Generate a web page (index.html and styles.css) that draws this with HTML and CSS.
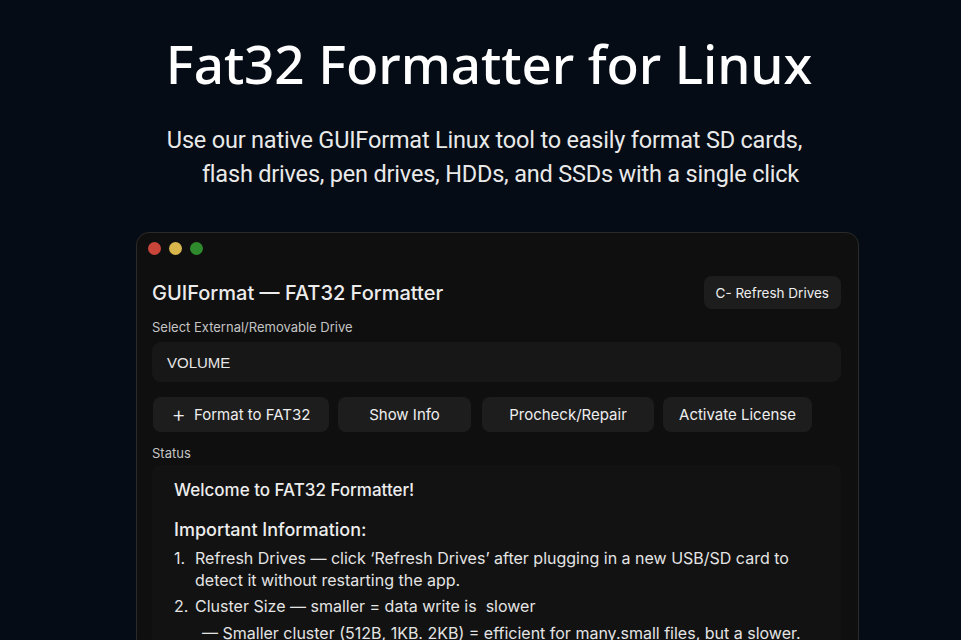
FILE: index.html
```html
<!DOCTYPE html>
<html lang="en">
<head>
<meta charset="utf-8">
<title>Fat32 Formatter for Linux</title>
<link rel="stylesheet" href="styles.css">
</head>
<body>
<main class="page">
  <header class="hero">
    <h1 class="hero-title">Fat32 Formatter for Linux</h1>
    <p class="hero-sub">
      <span class="line">Use our native GUIFormat Linux tool to easily format SD cards,</span>
      <span class="line line-2">flash drives, pen drives, HDDs, and SSDs with a single click</span>
    </p>
  </header>

  <section class="window">
    <div class="titlebar">
      <span class="dot dot-red"></span>
      <span class="dot dot-yellow"></span>
      <span class="dot dot-green"></span>
    </div>
    <div class="content">
      <div class="app-head">
        <h2 class="app-title">GUIFormat — FAT32 Formatter</h2>
        <button class="btn btn-refresh">C- Refresh Drives</button>
      </div>
      <div class="field-label">Select External/Removable Drive</div>
      <div class="select">VOLUME</div>
      <div class="actions">
        <button class="btn btn-action btn-format"><span class="plus">+</span>Format to FAT32</button>
        <button class="btn btn-action btn-info">Show Info</button>
        <button class="btn btn-action btn-check">Procheck/Repair</button>
        <button class="btn btn-action btn-license">Activate License</button>
      </div>
      <div class="field-label status-label">Status</div>
      <div class="status">
        <p class="status-welcome">Welcome to FAT32 Formatter!</p>
        <p class="status-heading">Important Information:</p>
        <ol class="status-list">
          <li><span class="num">1.</span><span class="txt">Refresh Drives — click ‘Refresh Drives’ after plugging in a new USB/SD card to detect it without restarting the app.</span></li>
          <li><span class="num">2.</span><span class="txt">Cluster Size — smaller = data write is&nbsp;&nbsp;slower<span class="sub">— Smaller cluster (512B, 1KB. 2KB) = efficient for many.small files, but a slower.</span></span></li>
        </ol>
      </div>
    </div>
  </section>
</main>
</body>
</html>
```

FILE: styles.css
```css
* { box-sizing: border-box; }

html, body {
  margin: 0;
  padding: 0;
  height: 100%;
  overflow: hidden;
}

body {
  background: #050c15;
  color: #f2f2f2;
  font-family: "Inter", "Liberation Sans", sans-serif;
}

.page {
  display: flex;
  flex-direction: column;
  align-items: center;
}

.hero {
  display: flex;
  flex-direction: column;
  align-items: center;
}

.hero-title {
  margin: 0;
  padding: 32px 0 0 17px;
  font-family: "Noto Sans", sans-serif;
  font-weight: 500;
  font-size: 53px;
  line-height: 64px;
  color: #ffffff;
  letter-spacing: -0.1px;
}

.hero-sub {
  margin: 27px 0 0;
  font-family: "Roboto", sans-serif;
  font-size: 23.5px;
  line-height: 34px;
  color: #e9e9e9;
  letter-spacing: -0.2px;
  display: flex;
  flex-direction: column;
  align-items: center;
}

.hero-sub .line {
  padding-left: 8px;
}

.hero-sub .line-2 {
  padding-left: 40px;
}

.window {
  align-self: flex-start;
  margin-top: 41px;
  margin-left: 136px;
  width: 723px;
  height: 420px;
  background: #0f0f0f;
  border: 1px solid #2a2a2a;
  border-radius: 13px;
  overflow: hidden;
}

.titlebar {
  display: flex;
  gap: 8px;
  padding: 9px 0 0 11px;
  height: 40px;
}

.dot {
  width: 13px;
  height: 13px;
  border-radius: 50%;
}
.dot-red { background: #c9453a; }
.dot-yellow { background: #d8b64b; }
.dot-green { background: #2e8a2c; }

.content {
  padding: 3px 17px 0 15px;
}

.app-head {
  display: flex;
  justify-content: space-between;
  align-items: center;
}

.app-title {
  margin: 0;
  font-size: 20px;
  font-weight: 500;
  color: #ececec;
  letter-spacing: 0;
}

.btn {
  font-family: inherit;
  border: none;
  background: #1d1d1d;
  color: #eeeeee;
  border-radius: 8px;
  cursor: pointer;
}

.btn-refresh {
  height: 33px;
  padding: 0 12px;
  font-size: 13.5px;
}

.field-label {
  margin-top: 10px;
  font-size: 13px;
  line-height: 16px;
  color: #c4c4c4;
}

.select {
  margin-top: 7px;
  height: 40px;
  background: #171717;
  border-radius: 9px;
  padding: 0 15px;
  display: flex;
  align-items: center;
  font-size: 15px;
  color: #e6e6e6;
  font-family: "Liberation Sans", sans-serif;
}

.actions {
  display: flex;
  gap: 9px;
  margin-top: 15px;
  padding-left: 1px;
}

.btn-action {
  height: 35px;
  font-size: 15px;
  display: flex;
  align-items: center;
  justify-content: center;
}
.btn-format { width: 176px; gap: 8px; }
.btn-info { width: 133px; }
.btn-check { width: 172px; margin-left: 2px; }
.btn-license { width: 149px; }

.plus {
  font-size: 22px;
  font-weight: 300;
  line-height: 1;
  margin-top: -2px;
}

.status-label {
  margin-top: 13px;
}

.status {
  margin-top: 4px;
  background: #121212;
  border-radius: 8px;
  padding: 15px 20px 0 22px;
  height: 200px;
}

.status-welcome, .status-heading {
  margin: 0;
  font-size: 17px;
  font-weight: 500;
  color: #ededed;
}

.status-heading {
  margin-top: 19px;
  font-size: 18px;
}

.status-list {
  list-style: none;
  margin: 7px 0 0;
  padding: 0;
  font-size: 16px;
  line-height: 22px;
  color: #e4e4e4;
}

.status-list li {
  display: flex;
  margin-bottom: 4px;
}

.status-list .num {
  width: 21px;
  flex: none;
}

.status-list .sub {
  display: block;
  margin-top: 5px;
  padding-left: 7px;
}
```
